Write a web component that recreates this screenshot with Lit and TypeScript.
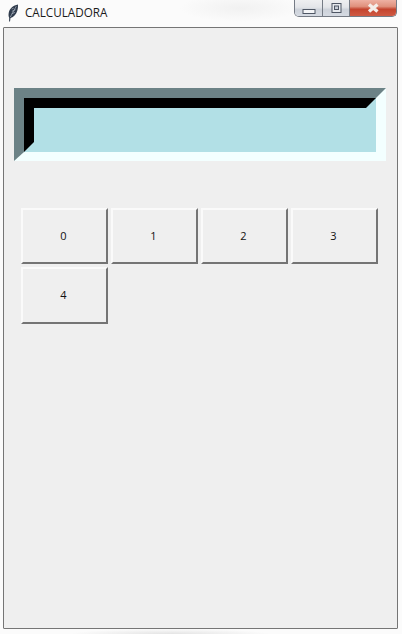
import { LitElement, html, css } from "lit";
import { customElement } from "lit/decorators.js";

@customElement("app-root")
export class AppRoot extends LitElement {
  static styles = css`
    :host { display: block; width: 402px; height: 634px; overflow: hidden; font-family: "Open Sans", "Noto Sans", sans-serif; color: #111;
      background:
        radial-gradient(ellipse 60px 14px at 240px 8px, #f1f1f1, transparent),
        radial-gradient(ellipse 100px 5px at 170px 634px, #e4e4e4, transparent),
        #fbfbfb; }
    .titlebar { height: 27px; display: flex; align-items: flex-start; box-sizing: border-box; padding-left: 7px; }
    .feather { width: 12px; height: 18px; margin-top: 4px; flex: none; }
    .title { margin: 4px 0 0 6px; font-size: 11.7px; line-height: 16px; color: #1a1a1a; flex: 1; }
    .controls { display: flex; width: 103px; height: 17px; margin-right: 5px; box-sizing: border-box; border: 1px solid #757b85; border-top: 0; border-radius: 0 0 5px 5px; overflow: hidden; }
    .ctl { display: flex; align-items: center; justify-content: center; width: 27px; background: linear-gradient(#eeeff1 0%, #e3e5e9 45%, #cdd2da 60%, #d5dae2 100%); border-right: 1px solid #757b85; box-sizing: border-box; }
    .ctl.first { width: 28px; }
    .ctl.close { flex: 1; width: auto; border-right: 0; background: linear-gradient(#eeb1a3 0%, #e0917d 40%, #c4442e 58%, #cf5b44 100%); }
    .frame { box-sizing: border-box; height: 602px; margin: 0 4px 0 3px; border: 1px solid #757575; border-radius: 1px; background: #efefef; padding: 60px 11px 0 10px; }
    .entry-outer { box-sizing: border-box; height: 73px; border-style: solid; border-width: 10px 10px 9px 10px; border-color: #6c8286 #f3ffff #f3ffff #6c8286; }
    .entry-inner { box-sizing: border-box; height: 100%; border-style: solid; border-width: 10px; border-color: #000 #b2e0e6 #b2e0e6 #000; background: #b2e0e6; }
    .keys { display: grid; grid-template-columns: repeat(4, 87px); grid-template-rows: 56px 57px; gap: 3px; margin: 47px 0 0 7px; }
    .key { appearance: none; margin: 0; padding: 0 2px 2px 0; box-sizing: border-box; border-style: solid; border-width: 2px; border-color: #fafafa #747474 #747474 #fafafa; background: #efefef; font: 11px "Open Sans", "Noto Sans", sans-serif; color: #111; }
  `;

  render() {
    return html`
      <div class="titlebar">
        <svg class="feather" viewBox="0 0 11 18">
          <path d="M10.4 0.5C6 1.2 2 4.5 1.2 9C0.9 11 1 12.5 1.7 13.8L1.6 17.5L2.5 17.6L3 14C6.4 13 8.8 10.2 9.7 7C10.4 4.5 10.7 2.2 10.4 0.5Z" fill="#2f3b4c"/>
          <path d="M8.8 2.2L2.8 13M6.2 4.2L4.2 5M8 5.6L4.4 7.4M7.4 8.4L4.2 9.8" stroke="#aeb8c4" stroke-width="0.7" fill="none"/>
        </svg>
        <div class="title">CALCULADORA</div>
        <div class="controls">
          <div class="ctl first"><svg width="14" height="16" viewBox="0 0 14 16"><rect x="1" y="9.5" width="12" height="4" fill="#f4f5f7" stroke="#4f5765"/></svg></div>
          <div class="ctl"><svg width="11" height="16" viewBox="0 0 11 16"><rect x="1" y="3.5" width="9" height="9" fill="#e6e9ee" stroke="#4f5765"/><rect x="3.5" y="6" width="4" height="3.5" fill="#c8ced8" stroke="#4f5765"/></svg></div>
          <div class="ctl close"><svg width="15" height="16" viewBox="0 0 15 16"><path d="M3 4.5L11.5 11.5M11.5 4.5L3 11.5" stroke="#f4eeea" stroke-width="3.4"/></svg></div>
        </div>
      </div>
      <div class="frame">
        <div class="entry-outer"><div class="entry-inner"></div></div>
        <div class="keys">
          ${["0", "1", "2", "3", "4"].map((k) => html`<button class="key">${k}</button>`)}
        </div>
      </div>
    `;
  }
}
